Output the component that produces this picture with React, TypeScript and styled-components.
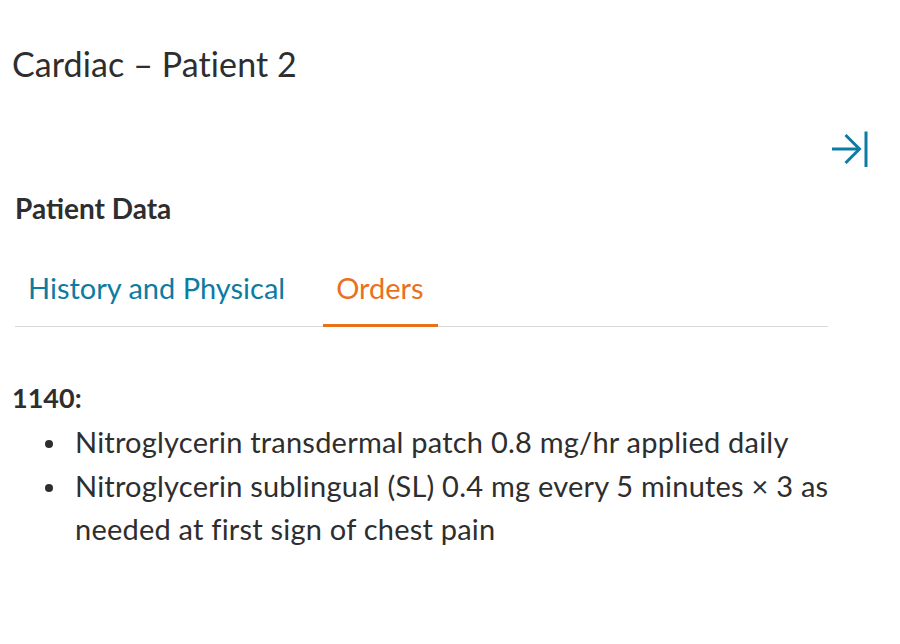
import React from "react";
import styled, { createGlobalStyle } from "styled-components";

const Global = createGlobalStyle`
  html, body { margin: 0; padding: 0; background: #ffffff; }
  body { font-family: Lato, "Noto Sans", sans-serif; color: #2e2e2e; }
  * { box-sizing: border-box; }
`;

const Page = styled.div`
  width: 900px;
  height: 644px;
  padding: 40px 30px 0 12px;
  display: flex;
  flex-direction: column;
`;

const Title = styled.h1`
  margin: 0;
  font-size: 34px;
  font-weight: 400;
  line-height: 48px;
  letter-spacing: 0.1px;
  color: #2e2e2e;
`;

const ToolRow = styled.div`
  display: flex;
  justify-content: flex-end;
  margin-top: 42px;
`;

const IconButton = styled.button`
  border: 0;
  background: none;
  padding: 0;
  width: 40px;
  height: 40px;
  display: flex;
  align-items: center;
  justify-content: center;
  color: #0c7ca2;
  cursor: pointer;
`;

const SectionLabel = styled.h2`
  margin: 21px 0 0 3px;
  font-size: 28px;
  font-weight: 700;
  line-height: 34px;
  color: #2e2e2e;
`;

const Tabs = styled.div`
  display: flex;
  gap: 24px;
  margin: 45px 42px 0 3px;
  border-bottom: 1px solid #dadada;
`;

const Tab = styled.button<{ $active?: boolean }>`
  border: 0;
  background: none;
  font-family: inherit;
  font-size: 29px;
  line-height: 36px;
  padding: 0 14px 18px 13px;
  margin-bottom: -1px;
  color: ${(p) => (p.$active ? "#e9711c" : "#0c7ca2")};
  border-bottom: 3px solid ${(p) => (p.$active ? "#e9711c" : "transparent")};
  cursor: pointer;
`;

const Time = styled.div`
  margin-top: 55px;
  font-size: 27px;
  font-weight: 700;
  line-height: 32px;
`;

const List = styled.ul`
  margin: 6px 0 0 0;
  padding-left: 63px;
  list-style: none;
  font-size: 29px;
  letter-spacing: 0.22px;
  line-height: 43.5px;
`;

const Item = styled.li`
  position: relative;
  &::before {
    content: "";
    position: absolute;
    left: -30px;
    top: 20px;
    width: 8px;
    height: 8px;
    border-radius: 50%;
    background: #2e2e2e;
  }
`;

export default function App() {
  return (
    <>
      <Global />
      <Page>
        <Title>Cardiac – Patient 2</Title>
        <ToolRow>
          <IconButton aria-label="Collapse panel">
            <svg width="40" height="40" viewBox="0 0 40 40" fill="none" stroke="currentColor" strokeWidth="3" strokeLinecap="butt">
              <path d="M2 19 H30" />
              <path d="M15.5 5 L29.5 19 L15.5 33" />
              <path d="M36 1.5 V37" />
            </svg>
          </IconButton>
        </ToolRow>
        <SectionLabel>Patient Data</SectionLabel>
        <Tabs>
          <Tab>History and Physical</Tab>
          <Tab $active>Orders</Tab>
        </Tabs>
        <Time>1140:</Time>
        <List>
          <Item>Nitroglycerin transdermal patch 0.8 mg/hr applied daily</Item>
          <Item>Nitroglycerin sublingual (SL) 0.4 mg every 5 minutes × 3 as needed at first sign of chest pain</Item>
        </List>
      </Page>
    </>
  );
}
